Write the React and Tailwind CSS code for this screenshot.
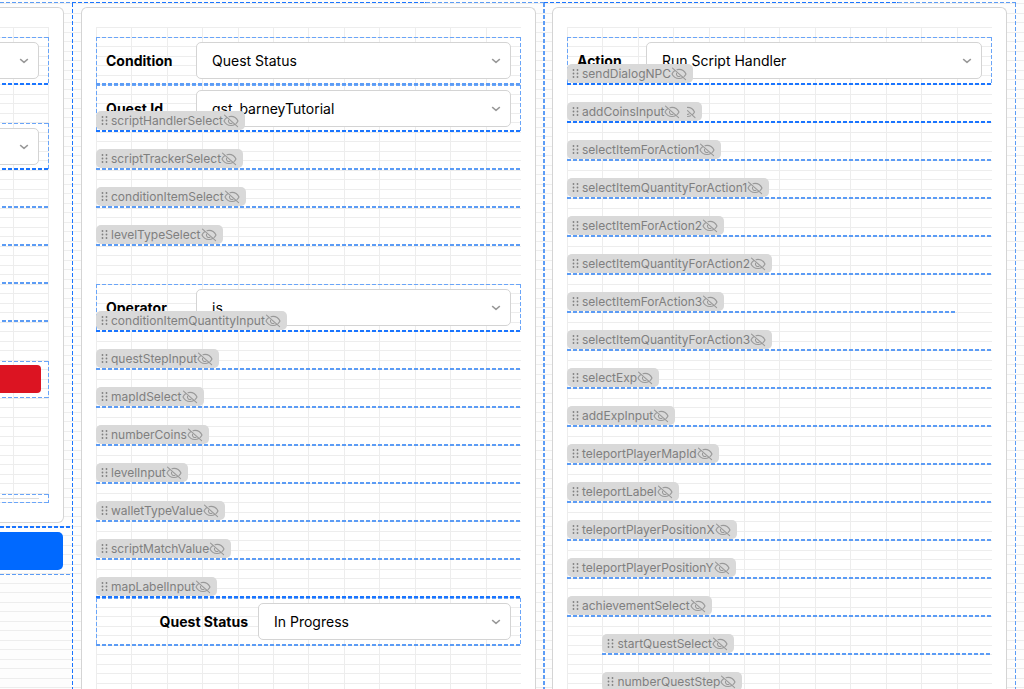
const DASH_X =
  "bg-[repeating-linear-gradient(to_right,currentColor_0_4px,transparent_4px_6px)]";
const DASH_Y =
  "bg-[repeating-linear-gradient(to_bottom,currentColor_0_4px,transparent_4px_6px)]";

// top, left and right edges of a selected row
const FRAME_EDGES =
  "[background:repeating-linear-gradient(to_right,currentColor_0_4px,transparent_4px_6px)_top/100%_1px_no-repeat,repeating-linear-gradient(to_bottom,currentColor_0_4px,transparent_4px_6px)_left/1px_100%_no-repeat,repeating-linear-gradient(to_bottom,currentColor_0_4px,transparent_4px_6px)_right/1px_100%_no-repeat]";

// 12 columns, two grid rows per 19px tile
const GRID_ROWS =
  "bg-[linear-gradient(to_bottom,#ededed_1px,transparent_1px_10px,#ededed_10px_11px,transparent_11px)] bg-size-[100%_19px]";
const GRID_COLS =
  "bg-[repeating-linear-gradient(to_right,#ededed_0_1px,transparent_1px_calc(100%/12))]";
const GRID_COLS_LEFT =
  "bg-[repeating-linear-gradient(to_left,#ededed_0_1px,transparent_1px_35px)]";

const conditionRows = ["scriptTrackerSelect", "conditionItemSelect", "levelTypeSelect"];

const operatorRows = [
  "questStepInput",
  "mapIdSelect",
  "numberCoins",
  "levelInput",
  "walletTypeValue",
  "scriptMatchValue",
  "mapLabelInput",
];

const actionRows = [
  { name: "addCoinsInput", strong: true, extra: true },
  { name: "selectItemForAction1" },
  { name: "selectItemQuantityForAction1" },
  { name: "selectItemForAction2" },
  { name: "selectItemQuantityForAction2" },
  { name: "selectItemForAction3", line: "w-11/12" },
  { name: "selectItemQuantityForAction3" },
  { name: "selectExp" },
  { name: "addExpInput" },
  { name: "teleportPlayerMapId" },
  { name: "teleportLabel" },
  { name: "teleportPlayerPositionX" },
  { name: "teleportPlayerPositionY" },
  { name: "achievementSelect" },
  { name: "startQuestSelect", indent: true },
  { name: "numberQuestStep", indent: true },
];

const DragDots = () => (
  <svg viewBox="0 0 7 9" className="w-[7px] h-[9px] shrink-0" fill="#808080">
    {[1, 4.5, 8].map((y) => (
      <g key={y}>
        <circle cx="1.5" cy={y} r="0.9" />
        <circle cx="5.5" cy={y} r="0.9" />
      </g>
    ))}
  </svg>
);

const EyeOff = () => (
  <svg
    viewBox="0 0 16 14"
    className="w-4 h-[14px] shrink-0"
    fill="none"
    stroke="#999"
    strokeWidth="1.1"
    strokeLinecap="round"
  >
    <path d="M3.6 3.8C2.5 4.600 1.600 5.700 1 7c1.300 2.700 3.900 4.500 7 4.500 1.400 0 2.700-.4 3.800-1" />
    <path d="M6 2.700C6.600 2.500 7.300 2.400 8 2.400c3.100 0 5.700 1.900 7 4.600-.5 1-1.200 1.900-2 2.600" />
    <path d="M5.600 6.200a2.500 2.500 0 0 0 3.400 3.100" />
    <path d="M1.500 1.200 14.600 12.600" />
  </svg>
);

const HalfEyeOff = () => (
  <svg
    viewBox="0 0 10 14"
    className="w-[10px] h-[14px] shrink-0"
    fill="none"
    stroke="#999"
    strokeWidth="1.1"
    strokeLinecap="round"
  >
    <path d="M1.500 2.400c3.300 0 5.800 1.900 7 4.600-.5 1-1.200 1.900-2 2.600" />
    <path d="M1.500 11.500c1.200 0 2.200-.2 3.200-.7" />
    <path d="M1.500 9.400c.7 0 1.200-.2 1.600-.6" />
    <path d="M1.500 5.600 9 12.600" />
  </svg>
);

const Chevron = () => (
  <svg
    viewBox="0 0 10 6"
    className="absolute right-[10px] top-4 w-[10px] h-[6px] pointer-events-none"
    fill="none"
    stroke="#999"
    strokeWidth="1.4"
    strokeLinecap="round"
    strokeLinejoin="round"
  >
    <path d="M1.500 1.400 5 4.400 8.500 1.400" />
  </svg>
);

const Badge = ({ name, extra }) => (
  <div className="relative z-10 flex items-center w-max h-[19px] pl-[5px] pr-[6px] rounded-[5px] bg-[#d9d9d9] text-[#7f7f7f] text-[12px] leading-[19px]">
    <DragDots />
    <span className="ml-[3px]">{name}</span>
    <EyeOff />
    {extra && (
      <span className="ml-[6px] flex">
        <HalfEyeOff />
      </span>
    )}
  </div>
);

const Line = ({ strong, className = "w-full" }) => (
  <div
    className={`h-[2px] ${DASH_X} ${strong ? "text-[#1a75ff]" : "text-[#5c9cf5]"} ${className}`}
  />
);

const HiddenRow = ({ name, strong, extra, indent, line }) => (
  <div className={`flex flex-col justify-end h-[38px] shrink-0 ${indent ? "ml-auto w-11/12" : ""}`}>
    {name && <Badge name={name} extra={extra} />}
    <Line strong={strong} className={line} />
  </div>
);

const Frame = ({ children, height = "h-12", strong, badge }) => (
  <div className={`relative flex items-start shrink-0 pt-[5px] px-[10px] ${height}`}>
    {children}
    <div className={`absolute inset-0 pointer-events-none text-[#6aa5f8] ${FRAME_EDGES}`} />
    <div className="absolute inset-x-0 bottom-0">
      {badge && <Badge name={badge} />}
      <Line strong={strong} />
    </div>
  </div>
);

const SelectBox = ({ id, value, label }) => (
  <div className="relative flex-1 min-w-0">
    <select
      id={id}
      aria-label={label}
      className="block w-full h-[37px] pl-[15px] pr-6 appearance-none rounded-[5px] border border-[#d4d4d4] bg-white text-[14px] text-black"
    >
      <option>{value}</option>
    </select>
    <Chevron />
  </div>
);

const Field = ({ id, label, value, labelClass }) => (
  <>
    <label htmlFor={id} className={`shrink-0 text-[14px] leading-[37px] font-bold text-black ${labelClass}`}>
      {label}
    </label>
    <SelectBox id={id} value={value} />
  </>
);

const GridArea = ({ children, cols = GRID_COLS, className = "" }) => (
  <div className={GRID_ROWS + " " + className}>
    <div className={`flex flex-col h-full pt-[10px] ${cols}`}>{children}</div>
  </div>
);

const Card = ({ children }) => (
  <div className="flex-1 mx-2 mt-1 px-[14px] pt-[19px] rounded-t-md border border-b-0 border-[#d4d4d4] bg-white">
    {children}
  </div>
);

const LeftColumn = () => (
  <div className="flex flex-col w-[72px] shrink-0">
    <div className="mt-1 mr-2 pt-[19px] pr-[14px] pb-[19px] rounded-r-md border border-l-0 border-[#d4d4d4] bg-white">
      <GridArea cols={GRID_COLS_LEFT}>
        <div className="-ml-4 flex flex-col">
          <Frame strong>
            <SelectBox label="First option" />
          </Frame>
          <div className="h-[38px]" />
          <Frame height="h-[47px]" strong>
            <SelectBox label="Second option" />
          </Frame>
          <HiddenRow />
          <HiddenRow />
          <HiddenRow />
          <HiddenRow />
          <div className="relative mt-[39px] h-[37px] py-1 pr-2">
            <button aria-label="Delete" className="block w-full h-7 rounded-[4px] bg-[#dc1422]" />
            <div className={`absolute inset-0 pointer-events-none text-[#6aa5f8] ${FRAME_EDGES}`} />
            <div className={`absolute inset-x-0 bottom-0 h-px text-[#6aa5f8] ${DASH_X}`} />
          </div>
          <div className="relative mt-24 h-[9px] py-1 pr-[10px]">
            <hr className="border-[#dcdcdc]" />
            <div className={`absolute inset-0 pointer-events-none text-[#6aa5f8] ${FRAME_EDGES}`} />
            <div className={`absolute inset-x-0 bottom-0 h-px text-[#6aa5f8] ${DASH_X}`} />
          </div>
        </div>
      </GridArea>
    </div>
    <div className={`mt-[3px] h-[2px] text-[#1a75ff] ${DASH_X}`} />
    <div className="py-1 pr-[9px]">
      <button aria-label="Save" className="block w-full h-[38px] rounded-r-[5px] bg-[#0069ff]" />
    </div>
    <div className={`h-px text-[#5c9cf5] ${DASH_X}`} />
  </div>
);

const App = () => {
  return (
    <div className="flex flex-col h-screen overflow-hidden bg-[#fdfdfd] font-[Inter,sans-serif]">
      {/* Bottom edge of the row above */}
      <div className="flex shrink-0 h-1 pr-2 items-end">
        <div className={`w-[72px] h-[2px] text-[#5c9cf5] ${DASH_X}`} />
        <div className="flex flex-1">
          <div className={`w-3/4 h-[2px] text-[#1a75ff] border-r ${DASH_X}`} />
          <div className={`flex-1 h-[2px] text-[#5c9cf5] ${DASH_X}`} />
        </div>
        <div className="flex flex-1">
          <div className={`w-3/4 h-[2px] text-[#1a75ff] border-r ${DASH_X}`} />
          <div className={`flex-1 h-[2px] text-[#5c9cf5] ${DASH_X}`} />
        </div>
      </div>

      <div className={`-mt-px flex flex-1 min-h-0 pr-2 ${GRID_ROWS}`}>
        <LeftColumn />
        <div className={`w-px text-[#1a75ff] ${DASH_Y}`} />

        {/* Condition */}
        <div className="flex flex-1 min-w-0">
          <Card>
            <GridArea className="h-full">
              <Frame>
                <Field id="condition" label="Condition" value="Quest Status" labelClass="w-[90px]" />
              </Frame>
              <Frame height="h-[47px]" strong badge="scriptHandlerSelect">
                <Field id="questId" label="Quest Id" value="qst_barneyTutorial" labelClass="w-[90px]" />
              </Frame>
              {conditionRows.map((name) => (
                <HiddenRow key={name} name={name} />
              ))}
              <div className="h-[38px] shrink-0" />
              <Frame strong badge="conditionItemQuantityInput">
                <Field id="operator" label="Operator" value="is" labelClass="w-[90px]" />
              </Frame>
              {operatorRows.map((name) => (
                <HiddenRow key={name} name={name} strong={name === "mapLabelInput"} />
              ))}
              <Frame>
                <Field
                  id="questStatus"
                  label="Quest Status"
                  value="In Progress"
                  labelClass="w-[152px] pr-[10px] text-right"
                />
              </Frame>
            </GridArea>
          </Card>
        </div>
        <div className={`-mx-px w-[2px] text-[#5c9cf5] ${DASH_Y}`} />

        {/* Action */}
        <div className="flex flex-1 min-w-0">
          <Card>
            <GridArea className="h-full">
              <Frame strong badge="sendDialogNPC">
                <Field id="action" label="Action" value="Run Script Handler" labelClass="w-[69px]" />
              </Frame>
              {actionRows.map((row) => (
                <HiddenRow key={row.name} {...row} />
              ))}
            </GridArea>
          </Card>
        </div>
        <div className={`w-px text-[#5c9cf5] ${DASH_Y}`} />
      </div>
    </div>
  );
};

export default App;
